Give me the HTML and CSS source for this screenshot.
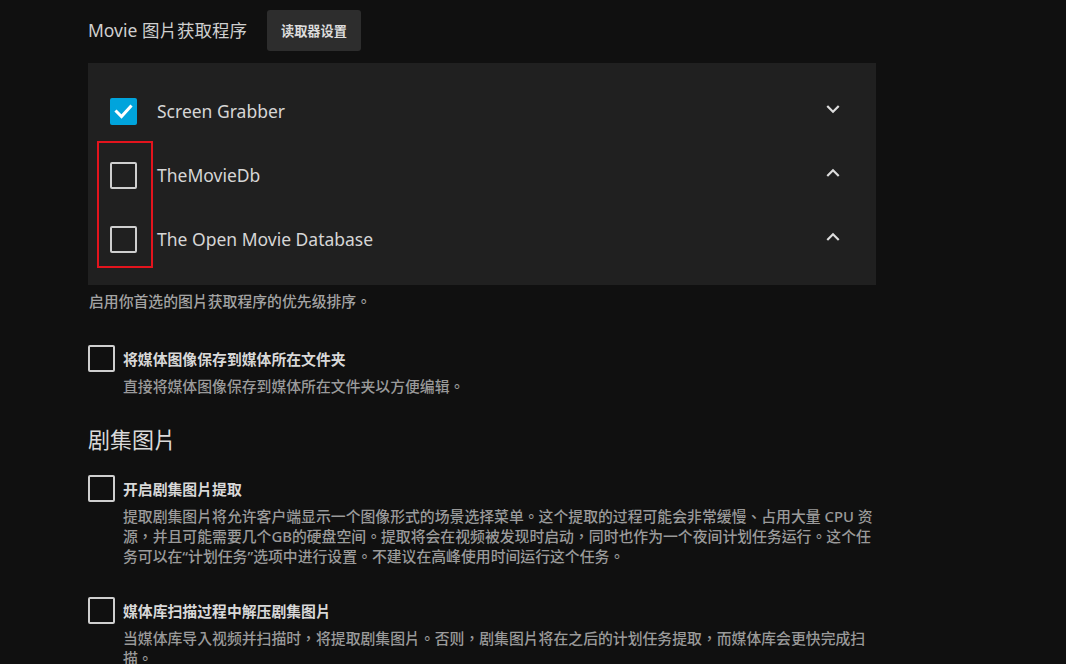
FILE: index.html
```html
<!DOCTYPE html>
<html lang="zh-TW">
<head>
<meta charset="utf-8">
<title>Movie 图片获取程序</title>
<link rel="stylesheet" href="styles.css">
</head>
<body>
<main class="page">
  <div class="title-row">
    <h2 class="section-title">Movie 图片获取程序</h2>
    <button class="btn" type="button">读取器设置</button>
  </div>

  <div class="panel">
    <div class="row">
      <span class="box checked">
        <svg viewBox="0 0 27 27" width="27" height="27"><polyline points="6.5,13.5 11.5,18.5 20.5,8.5" fill="none" stroke="#fff" stroke-width="3" stroke-linecap="square"/></svg>
      </span>
      <span class="row-label">Screen Grabber</span>
      <svg class="chev" viewBox="0 0 24 24" width="26" height="26"><path d="M7.41 8.59L12 13.17l4.59-4.58L18 10l-6 6-6-6 1.41-1.41z"/></svg>
    </div>
    <div class="row">
      <span class="box"></span>
      <span class="row-label">TheMovieDb</span>
      <svg class="chev" viewBox="0 0 24 24" width="26" height="26"><path d="M7.41 15.41L12 10.83l4.59 4.58L18 14l-6-6-6 6z"/></svg>
    </div>
    <div class="row">
      <span class="box"></span>
      <span class="row-label">The Open Movie Database</span>
      <svg class="chev" viewBox="0 0 24 24" width="26" height="26"><path d="M7.41 15.41L12 10.83l4.59 4.58L18 14l-6-6-6 6z"/></svg>
    </div>
    <div class="highlight"></div>
  </div>
  <p class="hint">启用你首选的图片获取程序的优先级排序。</p>

  <div class="field f-save">
    <span class="box"></span>
    <span class="field-label">将媒体图像保存到媒体所在文件夹</span>
    <p class="field-desc">直接将媒体图像保存到媒体所在文件夹以方便编辑。</p>
  </div>

  <h2 class="heading">剧集图片</h2>

  <div class="field f-extract">
    <span class="box"></span>
    <span class="field-label">开启剧集图片提取</span>
    <p class="field-desc">提取剧集图片将允许客户端显示一个图像形式的场景选择菜单。这个提取的过程可能会非常缓慢、占用大量 CPU 资源，并且可能需要几个GB的硬盘空间。提取将会在视频被发现时启动，同时也作为一个夜间计划任务运行。这个任务可以在“计划任务”选项中进行设置。不建议在高峰使用时间运行这个任务。</p>
  </div>

  <div class="field f-scan">
    <span class="box"></span>
    <span class="field-label">媒体库扫描过程中解压剧集图片</span>
    <p class="field-desc">当媒体库导入视频并扫描时，将提取剧集图片。否则，剧集图片将在之后的计划任务提取，而媒体库会更快完成扫描。</p>
  </div>
</main>
</body>
</html>
```
FILE: styles.css
```css
* { box-sizing: border-box; }

html, body {
  margin: 0;
  padding: 0;
  background: #101010;
  height: 100%;
  overflow: hidden;
}

body {
  font-family: "Noto Sans", "Noto Sans CJK TC", "Noto Sans CJK SC", sans-serif;
  color: #dddddd;
  font-size: 16.5px;
}

.page {
  width: 788px;
  margin-left: 88px;
  padding-top: 10px;
}

.title-row {
  display: flex;
  align-items: center;
  gap: 20px;
  height: 41px;
}

.section-title {
  margin: 0;
  font-size: 17.5px;
  font-weight: 400;
  color: #cfcfcf;
  line-height: 41px;
}

.btn {
  height: 41px;
  width: 94px;
  padding: 0;
  border: 0;
  border-radius: 3px;
  background: #2d2d2d;
  color: #dcdcdc;
  font-family: inherit;
  font-size: 13.2px;
  font-weight: 700;
}

.panel {
  position: relative;
  margin-top: 12px;
  background: #202020;
  padding: 16px 0 14px 22px;
}

.row {
  display: flex;
  align-items: center;
  height: 64px;
}

.box {
  width: 27px;
  height: 27px;
  flex: none;
  border: 2px solid #cfcfcf;
  border-radius: 2px;
  display: block;
}

.box.checked {
  border: 0;
  background: #00a4dc;
}

.box.checked svg { display: block; }

.row-label {
  margin-left: 20px;
  font-size: 17.5px;
  color: #d6d6d6;
  flex: 1;
}

.chev {
  fill: #dedede;
  margin-right: 30px;
  margin-bottom: 4px;
}

.highlight {
  position: absolute;
  left: 9px;
  top: 78px;
  width: 56px;
  height: 127px;
  border: 2px solid #e3141d;
}

.hint {
  margin: 6px 0 0;
  font-size: 14.85px;
  line-height: 20px;
  font-weight: 500;
  color: #a3a3a3;
  padding-left: 1px;
}

.field {
  display: grid;
  grid-template-columns: 27px 1fr;
  column-gap: 8px;
}

.field .box { grid-column: 1; grid-row: 1; }

.field-label {
  grid-column: 2;
  grid-row: 1;
  font-size: 14.85px;
  line-height: 25px;
  padding-top: 2px;
  font-weight: 700;
  color: #d8d8d8;
}

.field-desc {
  grid-column: 2;
  grid-row: 2;
  margin: 4px 0 0;
  font-size: 14.85px;
  line-height: 20px;
  font-weight: 500;
  color: #9a9a9a;
}

.f-save { margin-top: 34px; }

.heading {
  margin: 28px 0 0;
  font-size: 22px;
  line-height: 30px;
  font-weight: 400;
  color: #dadada;
}

.f-extract { margin-top: 21px; }
.f-scan { margin-top: 31px; }
```
